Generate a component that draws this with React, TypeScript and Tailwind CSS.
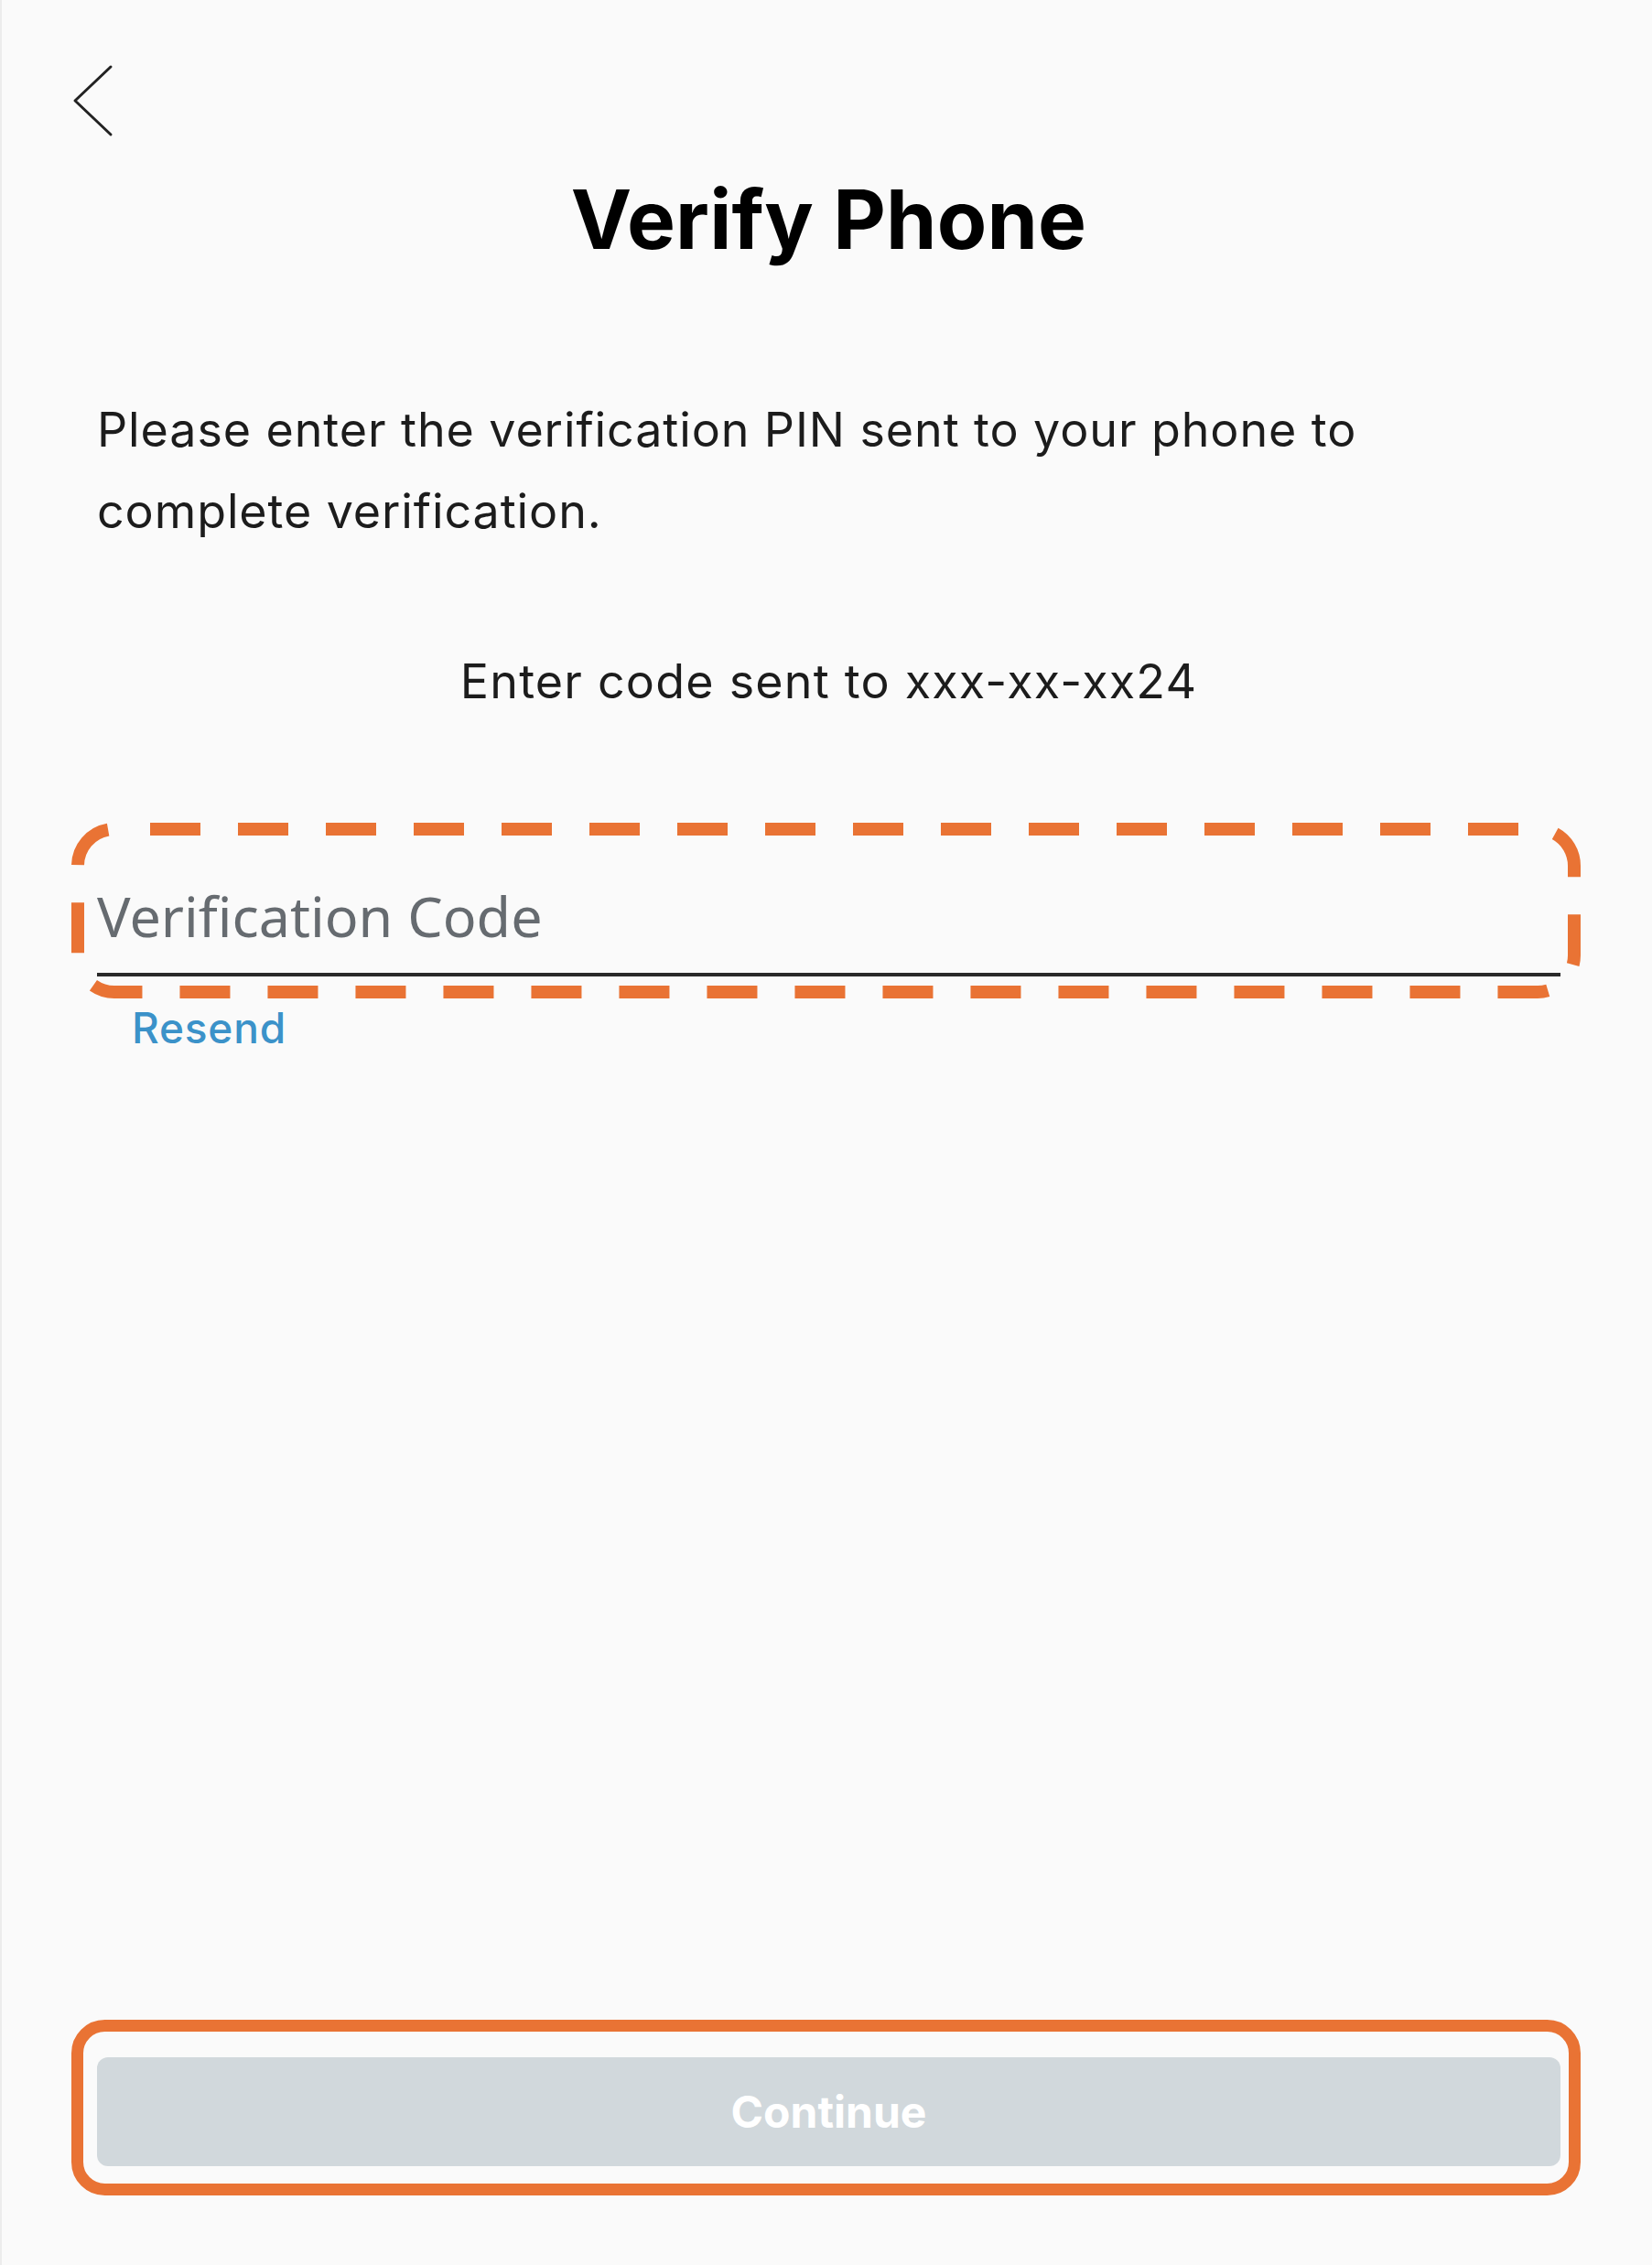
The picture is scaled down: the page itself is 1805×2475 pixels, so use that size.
import React from 'react'

const sans = { fontFamily: 'Inter, "Noto Sans", sans-serif' }

export default function App() {
  return (
    <div
      className="min-h-[2475px] w-full flex flex-col bg-[#fafafa] border-l-2 border-[#ececec] pl-[104px] pr-[100px]"
      style={sans}
    >
      {/* 뒤로 가기 */}
      <div className="pt-[70px] -ml-[27px]">
        <svg width="46" height="80" viewBox="0 0 46 80" fill="none">
          <polyline
            points="42,3 3,40 42,77"
            stroke="#222222"
            strokeWidth="3"
            strokeLinecap="round"
            strokeLinejoin="round"
          />
        </svg>
      </div>

      {/* 제목 */}
      <h1 className="mt-[40px] text-center text-[89px] leading-[100px] font-bold text-black tracking-[0.2px]">
        Verify Phone
      </h1>

      {/* 안내 문구 */}
      <p className="mt-[135px] text-[52px] leading-[89px] text-[#1c1c1c] tracking-[0.9px] pr-[120px]">
        Please enter the verification PIN sent to your phone to complete verification.
      </p>

      <p className="mt-[97px] text-center text-[52px] leading-[89px] text-[#1c1c1c] tracking-[1.2px]">
        Enter code sent to xxx-xx-xx24
      </p>

      {/* 인증 코드 입력 */}
      <div className="relative mt-[177px] pb-[27px] border-b-4 border-[#2a2a2a]">
        <input
          className="w-full h-[70px] bg-transparent outline-none text-[61px] leading-[70px] text-[#333] placeholder:text-[#666b70]"
          style={{ fontFamily: '"Noto Sans", "Open Sans", sans-serif' }}
          placeholder="Verification Code"
        />
        <svg
          className="absolute -left-[28px] -top-[67px] pointer-events-none"
          width="1649"
          height="192"
          viewBox="0 0 1649 192"
          fill="none"
        >
          <rect
            x="7"
            y="7"
            width="1635"
            height="178"
            rx="40"
            stroke="#e97334"
            strokeWidth="14"
            strokeDasharray="55 41"
            strokeDashoffset="57"
          />
        </svg>
      </div>

      <button className="self-start mt-[31px] ml-[38px] text-[46px] leading-[50px] font-medium text-[#3b92c9] tracking-[0.8px]">
        Resend
      </button>

      <div className="flex-1" />

      {/* 계속 버튼 */}
      <div className="relative mb-[108px]">
        <button className="w-full h-[119px] rounded-[12px] bg-[#d1d8dc] text-white text-[48px] font-bold">
          Continue
        </button>
        <svg
          className="absolute -left-[28px] -top-[41px] pointer-events-none"
          width="1649"
          height="192"
          viewBox="0 0 1649 192"
          fill="none"
        >
          <rect
            x="6.5"
            y="6.5"
            width="1636"
            height="179"
            rx="30"
            stroke="#e97334"
            strokeWidth="13"
          />
        </svg>
      </div>
    </div>
  )
}
